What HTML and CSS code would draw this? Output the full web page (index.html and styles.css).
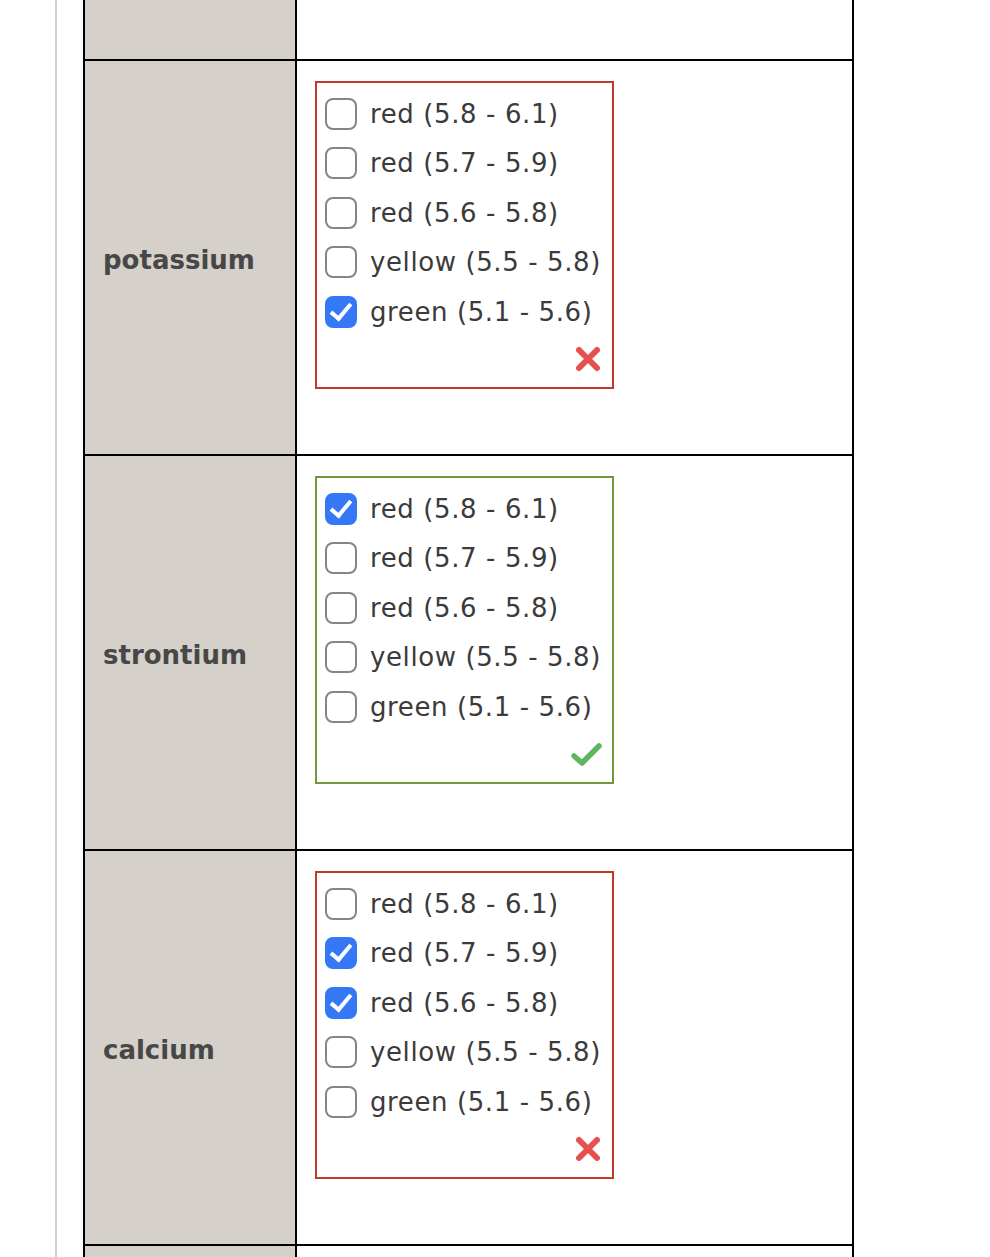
FILE: index.html
```html
<!DOCTYPE html>
<html lang="en">
<head>
    <meta charset="UTF-8">
    <meta name="viewport" content="width=device-width, initial-scale=1.0">
    <title>Flame test quiz</title>
    <link rel="stylesheet" href="styles.css">
</head>
<body>
    <div class="page">
        <table class="quiz">
            <tr class="row-top">
                <th></th>
                <td></td>
            </tr>
            <tr>
                <th>potassium</th>
                <td>
                    <div class="answers wrong">
                        <label class="option"><span class="box"></span>red (5.8 - 6.1)</label>
                        <label class="option"><span class="box"></span>red (5.7 - 5.9)</label>
                        <label class="option"><span class="box"></span>red (5.6 - 5.8)</label>
                        <label class="option"><span class="box"></span>yellow (5.5 - 5.8)</label>
                        <label class="option"><span class="box checked"></span>green (5.1 - 5.6)</label>
                        <div class="feedback">
                            <svg width="28" height="28" viewBox="0 0 28 28"><path d="M5 5 L23 23 M23 5 L5 23" stroke="#e6504e" stroke-width="6" stroke-linecap="round"/></svg>
                        </div>
                    </div>
                </td>
            </tr>
            <tr>
                <th>strontium</th>
                <td>
                    <div class="answers right">
                        <label class="option"><span class="box checked"></span>red (5.8 - 6.1)</label>
                        <label class="option"><span class="box"></span>red (5.7 - 5.9)</label>
                        <label class="option"><span class="box"></span>red (5.6 - 5.8)</label>
                        <label class="option"><span class="box"></span>yellow (5.5 - 5.8)</label>
                        <label class="option"><span class="box"></span>green (5.1 - 5.6)</label>
                        <div class="feedback">
                            <svg width="32" height="26" viewBox="0 0 32 26"><path d="M4 15 L12 22 L29 5" fill="none" stroke="#5cb85c" stroke-width="5.5" stroke-linecap="round" stroke-linejoin="round"/></svg>
                        </div>
                    </div>
                </td>
            </tr>
            <tr>
                <th>calcium</th>
                <td>
                    <div class="answers wrong">
                        <label class="option"><span class="box"></span>red (5.8 - 6.1)</label>
                        <label class="option"><span class="box checked"></span>red (5.7 - 5.9)</label>
                        <label class="option"><span class="box checked"></span>red (5.6 - 5.8)</label>
                        <label class="option"><span class="box"></span>yellow (5.5 - 5.8)</label>
                        <label class="option"><span class="box"></span>green (5.1 - 5.6)</label>
                        <div class="feedback">
                            <svg width="28" height="28" viewBox="0 0 28 28"><path d="M5 5 L23 23 M23 5 L5 23" stroke="#e6504e" stroke-width="6" stroke-linecap="round"/></svg>
                        </div>
                    </div>
                </td>
            </tr>
            <tr>
                <th></th>
                <td></td>
            </tr>
        </table>
    </div>
</body>
</html>
```

FILE: styles.css
```css
body {
    margin: 0;
    padding: 0;
    background: white;
    font-family: Verdana, "DejaVu Sans", sans-serif;
    color: #333;
    overflow: hidden;
}
.page {
    margin-left: 55px;
    border-left: 2px solid #cfcfcf;
    padding-left: 26px;
    min-height: 1257px;
}
.quiz {
    border-collapse: collapse;
    table-layout: fixed;
    width: 771px;
}
.quiz th,
.quiz td {
    border: 2px solid #000;
    height: 395px;
    padding: 20px 18px;
    box-sizing: border-box;
}
.quiz th {
    width: 212px;
    background: #d5d1ca;
    text-align: left;
    vertical-align: middle;
    font-size: 26px;
    font-weight: bold;
    color: #474747;
    padding-top: 24px;
}
.quiz td {
    vertical-align: top;
}
.quiz .row-top th,
.quiz .row-top td {
    height: 60px;
    border-top: none;
    padding: 0;
}
.answers {
    width: 299px;
    box-sizing: border-box;
    padding: 6px 7px 6px 8px;
    border: 2px solid #c0392b;
}
.answers.right {
    border-color: #6e9a3c;
}
.option {
    display: flex;
    align-items: center;
    height: 49.5px;
    font-size: 26px;
    letter-spacing: 0.6px;
    color: #3b3b3b;
}
.box {
    width: 32px;
    height: 32px;
    box-sizing: border-box;
    border: 2.5px solid #858585;
    border-radius: 8px;
    margin-right: 13px;
    flex-shrink: 0;
    position: relative;
}
.box.checked {
    background: #3478f6;
    border-color: #3478f6;
}
.box.checked::after {
    content: "";
    position: absolute;
    left: 8px;
    top: 1px;
    width: 8px;
    height: 17px;
    border: solid white;
    border-width: 0 4.5px 4.5px 0;
    transform: rotate(40deg);
}
.feedback {
    height: 44px;
    display: flex;
    align-items: center;
    justify-content: flex-end;
    padding-right: 3px;
}
```
